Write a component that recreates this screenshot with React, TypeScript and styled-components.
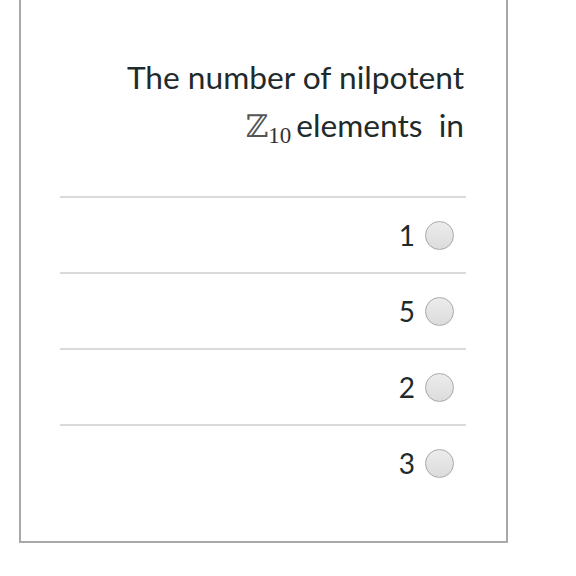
import React from "react";
import styled, { createGlobalStyle } from "styled-components";

const GlobalStyle = createGlobalStyle`
    html, body {
        margin: 0;
        padding: 0;
        background: #ffffff;
    }
    body {
        font-family: Lato, "Open Sans", sans-serif;
    }
`;

const Card = styled.div`
    box-sizing: border-box;
    width: 489px;
    margin-left: 19px;
    padding: 53px 40px 41px 39px;
    border: 2px solid #a8a8a8;
    border-top: none;
    background: #ffffff;
`;

const Question = styled.div`
    text-align: right;
    font-size: 31.7px;
    line-height: 48px;
    color: #1f2b2b;
    padding-right: 2px;
    margin-bottom: 46px;
`;

const MathSet = styled.span`
    font-family: "DejaVu Serif", "Liberation Serif", serif;
    color: #555555;
    font-size: 31px;
`;

const Sub = styled.sub`
    font-family: "Liberation Serif", serif;
    font-size: 23px;
    color: #333333;
    vertical-align: -6px;
    line-height: 0;
    margin-right: 5px;
`;

const Options = styled.div`
    display: flex;
    flex-direction: column;
`;

const Row = styled.label`
    display: flex;
    align-items: center;
    justify-content: flex-end;
    gap: 10px;
    height: 76px;
    box-sizing: border-box;
    border-top: 2px solid #dadada;
    padding-right: 12px;
    cursor: pointer;
`;

const Value = styled.span`
    font-size: 28px;
    color: #1f2b2b;
`;

const Radio = styled.span`
    display: block;
    width: 27px;
    height: 27px;
    border-radius: 50%;
    border: 1px solid #a9a9a9;
    background: linear-gradient(180deg, #ececec 0%, #dcdcdc 100%);
`;

const answers = ["1", "5", "2", "3"];

const App: React.FC = () => {
    return (
        <>
            <GlobalStyle />
            <Card>
                <Question>
                    The number of nilpotent
                    <br />
                    <MathSet>ℤ</MathSet>
                    <Sub>10</Sub>elements&nbsp; in
                </Question>
                <Options>
                    {answers.map((a) => (
                        <Row key={a}>
                            <Value>{a}</Value>
                            <Radio />
                        </Row>
                    ))}
                </Options>
            </Card>
        </>
    );
};

export default App;
